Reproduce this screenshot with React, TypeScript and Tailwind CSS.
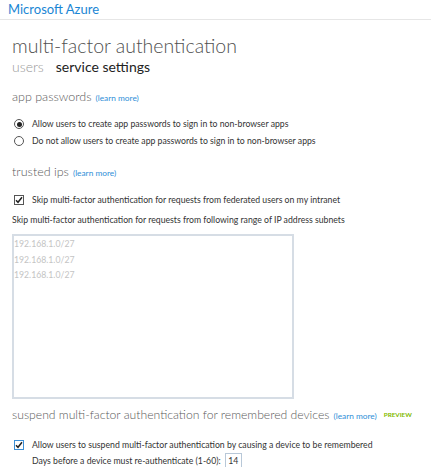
import React from "react";

const font = { fontFamily: 'Lato, "Open Sans", sans-serif' };

function LearnMore() {
  return <span className="text-[8.3px] text-[#2f8fd8] font-normal ml-[4px]">(learn more)</span>;
}

function Radio({ checked }: { checked?: boolean }) {
  return (
    <span className="w-[10px] h-[10px] rounded-full border border-[#555] bg-white flex items-center justify-center shrink-0">
      {checked && <span className="w-[5px] h-[5px] rounded-full bg-[#222]" />}
    </span>
  );
}

function Check({ blue }: { blue?: boolean }) {
  return (
    <span className={`w-[10px] h-[10px] border ${blue ? "border-[#3c8fd6]" : "border-[#555]"} bg-white flex items-center justify-center shrink-0`}>
      <svg width="8" height="8" viewBox="0 0 8 8">
        <path d="M1 4.2 L3 6.3 L7 1.2" fill="none" stroke="#222" strokeWidth="1.5" />
      </svg>
    </span>
  );
}

export default function App() {
  return (
    <div className="w-[431px] h-[467px] bg-white overflow-hidden text-[#444]" style={font}>
      <div className="h-[20px] border-b border-[#e6e6e6] pl-[8px] pt-[1px]">
        <div className="text-[13px] leading-[16px] text-[#1a86d4]">Microsoft Azure</div>
      </div>
      <div className="pl-[12px] whitespace-nowrap">
        <div className="mt-[14px] text-[19.5px] leading-[24px] font-light text-[#505050]">multi-factor authentication</div>
        <div className="flex gap-[12px] text-[14px] leading-[18px] font-light">
          <span className="text-[#999]">users</span>
          <span className="text-[#222] font-normal">service settings</span>
        </div>

        <div className="mt-[13px] text-[12.5px] leading-[16px] font-light text-[#5a5a5a]">
          app passwords<LearnMore />
        </div>
        <div className="mt-[12px] flex flex-col gap-[5px] text-[8.7px] leading-[12px] text-[#333]">
          <div className="h-[12px] flex items-center gap-[8px] pl-[2px]">
            <Radio checked />
            <span>Allow users to create app passwords to sign in to non-browser apps</span>
          </div>
          <div className="h-[12px] flex items-center gap-[8px] pl-[2px]">
            <Radio />
            <span>Do not allow users to create app passwords to sign in to non-browser apps</span>
          </div>
        </div>

        <div className="mt-[17px] text-[12.5px] leading-[16px] font-light text-[#5a5a5a]">
          trusted ips<LearnMore />
        </div>
        <div className="mt-[13px] h-[12px] flex items-center gap-[8px] pl-[2px] text-[8.7px] leading-[12px] text-[#333]">
          <Check />
          <span>Skip multi-factor authentication for requests from federated users on my intranet</span>
        </div>
        <div className="mt-[8px] text-[8.7px] leading-[12px] text-[#333]">
          Skip multi-factor authentication for requests from following range of IP address subnets
        </div>
        <div className="mt-[8px] w-[282px] h-[165px] border-2 border-[#d6dde5] flex flex-col text-[8.7px] leading-[15.5px] text-[#c4c4c4]">
          <span>192.168.1.0/27</span>
          <span>192.168.1.0/27</span>
          <span>192.168.1.0/27</span>
        </div>

        <div className="mt-[8px] flex items-start">
          <span className="text-[12.2px] leading-[16px] font-light text-[#5a5a5a]">
            suspend multi-factor authentication for remembered devices<LearnMore />
          </span>
          <span className="ml-[7px] mt-[4px] text-[6.3px] leading-[8px] font-bold text-[#7fba00]">PREVIEW</span>
        </div>
        <div className="mt-[15px] h-[12px] flex items-center gap-[8px] pl-[2px] text-[8.7px] leading-[12px] text-[#333]">
          <Check blue />
          <span>Allow users to suspend multi-factor authentication by causing a device to be remembered</span>
        </div>
        <div className="mt-[2px] h-[15px] pl-[20px] flex items-center gap-[4px] text-[8.7px] leading-[12px] text-[#333]">
          <span>Days before a device must re-authenticate (1-60):</span>
          <span className="w-[17px] h-[15px] border border-[#b8c8d8] flex items-center justify-center">14</span>
        </div>
      </div>
    </div>
  );
}
